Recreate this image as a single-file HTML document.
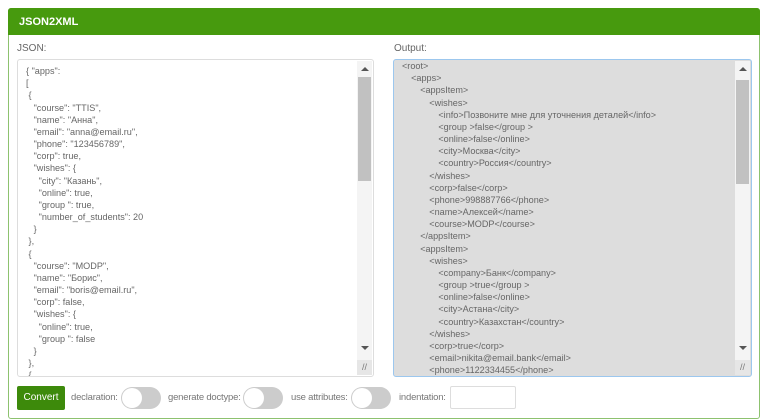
<!DOCTYPE html>
<html><head><meta charset="utf-8"><style>
*{box-sizing:border-box;margin:0;padding:0}
body{width:768px;height:420px;background:#fff;font-family:"Liberation Sans",sans-serif;position:relative;overflow:hidden;color:#777}
.panel{position:absolute;left:8px;top:8px;width:752px;height:411px;border:1px solid #8dc26f;border-radius:3px}
.hdr{position:absolute;left:8px;top:8px;width:752px;height:27px;background:#479a0e;color:#fff;font-size:11px;font-weight:bold;padding:8px 11px;border-radius:3px 3px 0 0}
.lbl{position:absolute;font-size:10px;color:#666}
.ta{position:absolute;top:59px;height:318px;border:1px solid #ddd;border-radius:3px;overflow:hidden;font-size:9.1px;line-height:12.17px;white-space:pre;color:#666}
.ta .txt{position:absolute;left:8px;top:5px}
.sb{position:absolute;right:1px;top:1px;width:15px;bottom:1px;background:#f4f4f4}
.th{position:absolute;left:1px;width:13px;background:#c1c1c1}
.up,.dn{position:absolute;left:4px;width:0;height:0;border-left:4px solid transparent;border-right:4px solid transparent}
.up{top:6px;border-bottom:4px solid #555}
.dn{bottom:25px;border-top:4px solid #555}
.rz{position:absolute;right:1px;bottom:1px;width:15px;height:15px;background:#e6e6e6;font-size:9px;color:#777;text-align:center;line-height:15px}
.tog{position:absolute;top:387px;width:40px;height:22px;border-radius:11px;background:#ccc}
.tog::after{content:"";position:absolute;left:1px;top:1px;width:20px;height:20px;border-radius:50%;background:#fff}
.t{position:absolute;top:392px;font-size:9.5px;letter-spacing:-0.2px;color:#777}
</style></head><body>
<div class="panel"></div>
<div class="hdr">JSON2XML</div>
<div class="lbl" style="left:17px;top:43px">JSON:</div>
<div class="lbl" style="left:394px;top:43px">Output:</div>
<div class="ta" style="left:17px;width:357px;background:#fff">
<div class="txt">{ "apps":
[
 {
   "course": "TTIS",
   "name": "Анна",
   "email": "anna@email.ru",
   "phone": "123456789",
   "corp": true,
   "wishes": {
     "city": "Казань",
     "online": true,
     "group ": true,
     "number_of_students": 20
   }
 },
 {
   "course": "MODP",
   "name": "Борис",
   "email": "boris@email.ru",
   "corp": false,
   "wishes": {
     "online": true,
     "group ": false
   }
 },
 {</div>
<div class="sb"><div class="up"></div><div class="th" style="top:16px;height:104px"></div><div class="dn"></div></div>
<div class="rz">//</div>
</div>
<div class="ta" style="left:393px;width:359px;background:#ddd;border-color:#9cc7ee">
<div class="txt" style="top:0">&lt;root&gt;
&ensp;&ensp;&lt;apps&gt;
&ensp;&ensp;&ensp;&ensp;&lt;appsItem&gt;
&ensp;&ensp;&ensp;&ensp;&ensp;&ensp;&lt;wishes&gt;
&ensp;&ensp;&ensp;&ensp;&ensp;&ensp;&ensp;&ensp;&lt;info&gt;Позвоните мне для уточнения деталей&lt;/info&gt;
&ensp;&ensp;&ensp;&ensp;&ensp;&ensp;&ensp;&ensp;&lt;group &gt;false&lt;/group &gt;
&ensp;&ensp;&ensp;&ensp;&ensp;&ensp;&ensp;&ensp;&lt;online&gt;false&lt;/online&gt;
&ensp;&ensp;&ensp;&ensp;&ensp;&ensp;&ensp;&ensp;&lt;city&gt;Москва&lt;/city&gt;
&ensp;&ensp;&ensp;&ensp;&ensp;&ensp;&ensp;&ensp;&lt;country&gt;Россия&lt;/country&gt;
&ensp;&ensp;&ensp;&ensp;&ensp;&ensp;&lt;/wishes&gt;
&ensp;&ensp;&ensp;&ensp;&ensp;&ensp;&lt;corp&gt;false&lt;/corp&gt;
&ensp;&ensp;&ensp;&ensp;&ensp;&ensp;&lt;phone&gt;998887766&lt;/phone&gt;
&ensp;&ensp;&ensp;&ensp;&ensp;&ensp;&lt;name&gt;Алексей&lt;/name&gt;
&ensp;&ensp;&ensp;&ensp;&ensp;&ensp;&lt;course&gt;MODP&lt;/course&gt;
&ensp;&ensp;&ensp;&ensp;&lt;/appsItem&gt;
&ensp;&ensp;&ensp;&ensp;&lt;appsItem&gt;
&ensp;&ensp;&ensp;&ensp;&ensp;&ensp;&lt;wishes&gt;
&ensp;&ensp;&ensp;&ensp;&ensp;&ensp;&ensp;&ensp;&lt;company&gt;Банк&lt;/company&gt;
&ensp;&ensp;&ensp;&ensp;&ensp;&ensp;&ensp;&ensp;&lt;group &gt;true&lt;/group &gt;
&ensp;&ensp;&ensp;&ensp;&ensp;&ensp;&ensp;&ensp;&lt;online&gt;false&lt;/online&gt;
&ensp;&ensp;&ensp;&ensp;&ensp;&ensp;&ensp;&ensp;&lt;city&gt;Астана&lt;/city&gt;
&ensp;&ensp;&ensp;&ensp;&ensp;&ensp;&ensp;&ensp;&lt;country&gt;Казахстан&lt;/country&gt;
&ensp;&ensp;&ensp;&ensp;&ensp;&ensp;&lt;/wishes&gt;
&ensp;&ensp;&ensp;&ensp;&ensp;&ensp;&lt;corp&gt;true&lt;/corp&gt;
&ensp;&ensp;&ensp;&ensp;&ensp;&ensp;&lt;email&gt;nikita@email.bank&lt;/email&gt;
&ensp;&ensp;&ensp;&ensp;&ensp;&ensp;&lt;phone&gt;1122334455&lt;/phone&gt;</div>
<div class="sb"><div class="up"></div><div class="th" style="top:19px;height:104px"></div><div class="dn"></div></div>
<div class="rz">//</div>
</div>
<div style="position:absolute;left:17px;top:386px;width:48px;height:24px;background:#3d8a0b;border-radius:2px;color:#fff;font-size:10px;text-align:center;line-height:24px">Convert</div>
<div class="t" style="left:71px">declaration:</div><div class="tog" style="left:121px"></div>
<div class="t" style="left:168px">generate doctype:</div><div class="tog" style="left:243px"></div>
<div class="t" style="left:291px">use attributes:</div><div class="tog" style="left:351px"></div>
<div class="t" style="left:399px">indentation:</div>
<div style="position:absolute;left:450px;top:386px;width:66px;height:23px;border:1px solid #ddd;border-radius:2px"></div>
</body></html>
